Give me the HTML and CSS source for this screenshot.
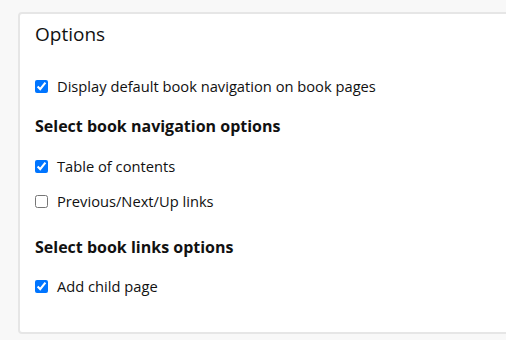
FILE: index.html
```html
<!DOCTYPE html>
<html>
<head>
<meta charset="utf-8">
<link rel="stylesheet" href="styles.css">
</head>
<body>
<div class="card">
  <h2 class="title">Options</h2>
  <label class="row row-main"><input type="checkbox" checked><span>Display default book navigation on book pages</span></label>
  <h3 class="heading heading-nav">Select book navigation options</h3>
  <label class="row row-toc"><input type="checkbox" checked><span>Table of contents</span></label>
  <label class="row row-prev"><input type="checkbox"><span>Previous/Next/Up links</span></label>
  <h3 class="heading heading-links">Select book links options</h3>
  <label class="row row-child"><input type="checkbox" checked><span>Add child page</span></label>
</div>
</body>
</html>
```
FILE: styles.css
```css
html, body {
  margin: 0;
  padding: 0;
}
body {
  background: #f8f8f8;
  font-family: "Open Sans", sans-serif;
  color: #111;
  padding: 12px 0 0 18px;
  overflow: hidden;
  height: 340px;
  box-sizing: border-box;
}
.card {
  width: 600px;
  height: 322px;
  box-sizing: border-box;
  background: #fff;
  border: 2px solid #e6e6e6;
  border-radius: 4px;
  padding: 6px 0 0 15px;
  display: flex;
  flex-direction: column;
  align-items: flex-start;
}
.title {
  margin: 0;
  font-size: 19px;
  font-weight: 400;
  line-height: 28px;
}
.row {
  display: flex;
  align-items: center;
  height: 20px;
  font-size: 14.7px;
  line-height: 20px;
}
.row input {
  margin: 0 9px 0 0;
  width: 13px;
  height: 13px;
}
.heading {
  margin: 0;
  font-size: 16px;
  font-weight: 700;
  line-height: 20px;
}
.row-main { margin-top: 28px; }
.heading-nav { margin-top: 20px; }
.row-toc { margin-top: 20px; }
.row-prev { margin-top: 15px; }
.heading-links { margin-top: 26px; }
.row-child { margin-top: 19px; }
```
